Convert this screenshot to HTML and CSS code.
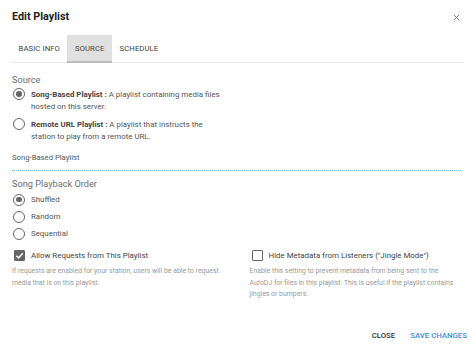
FILE: index.html
```html
<!DOCTYPE html>
<html>
<head>
<meta charset="utf-8">
<link rel="stylesheet" href="styles.css">
</head>
<body>
<div class="dialog">
  <div class="header">
    <div class="title">Edit Playlist</div>
    <div class="close-x">
      <svg width="7" height="7" viewBox="0 0 8 8"><path d="M1 1L7 7M7 1L1 7" stroke="#777" stroke-width="1.1"/></svg>
    </div>
  </div>
  <div class="tabs">
    <div class="tab">BASIC INFO</div>
    <div class="tab active">SOURCE</div>
    <div class="tab">SCHEDULE</div>
  </div>
  <div class="content">
    <div class="group-label">Source</div>
    <div class="option two">
      <span class="radio checked"></span>
      <div class="opt-text"><b>Song-Based Playlist :</b> A playlist containing media files<br>hosted on this server.</div>
    </div>
    <div class="option two">
      <span class="radio"></span>
      <div class="opt-text"><b>Remote URL Playlist :</b> A playlist that instructs the<br>station to play from a remote URL.</div>
    </div>
    <div class="section">
      <div class="section-title">Song-Based Playlist</div>
      <div class="dotted"></div>
    </div>
    <div class="group-label order">Song Playback Order</div>
    <div class="option"><span class="radio checked"></span><span class="opt-text">Shuffled</span></div>
    <div class="option"><span class="radio"></span><span class="opt-text">Random</span></div>
    <div class="option"><span class="radio"></span><span class="opt-text">Sequential</span></div>
    <div class="checks">
      <div class="check-col">
        <div class="check-row">
          <span class="checkbox checked">
            <svg width="9" height="9" viewBox="0 0 10 10"><path d="M1.5 5.2L4 7.6L8.6 2.4" fill="none" stroke="#fff" stroke-width="1.6"/></svg>
          </span>
          <span class="check-label">Allow Requests from This Playlist</span>
        </div>
        <div class="help">If requests are enabled for your station, users will be able to request media that is on this playlist.</div>
      </div>
      <div class="check-col">
        <div class="check-row">
          <span class="checkbox"></span>
          <span class="check-label">Hide Metadata from Listeners ("Jingle Mode")</span>
        </div>
        <div class="help">Enable this setting to prevent metadata from being sent to the AutoDJ for files in this playlist. This is useful if the playlist contains jingles or bumpers.</div>
      </div>
    </div>
  </div>
  <div class="actions">
    <span class="btn">CLOSE</span>
    <span class="btn primary">SAVE CHANGES</span>
  </div>
</div>
</body>
</html>
```
FILE: styles.css
```css
html, body {
  margin: 0;
  padding: 0;
  background: #fff;
}
body {
  font-family: Roboto, "Liberation Sans", sans-serif;
  color: rgba(0,0,0,0.87);
  width: 474px;
  height: 349px;
  overflow: hidden;
}
.dialog {
  display: flex;
  flex-direction: column;
}
.header {
  display: flex;
  justify-content: space-between;
  align-items: center;
  padding: 7px 12px 0 12px;
  height: 18px;
}
.title {
  font-size: 10.8px;
  font-weight: 700;
  color: #222;
}
.close-x {
  display: flex;
  margin-right: 2px;
  margin-top: 2px;
}
.tabs {
  display: flex;
  margin: 10px 11px 0 11px;
  border-bottom: 1px solid #e6e6e6;
  height: 27px;
}
.tab {
  font-size: 7.7px;
  color: #444;
  padding: 0 7.5px;
  display: flex;
  align-items: center;
  letter-spacing: 0.1px;
}
.active {
  background: #e0e0e0;
  border-bottom: 2px solid #bdbdbd;
  margin-bottom: -1px;
}
.content {
  padding: 0 12px;
}
.group-label {
  font-size: 9.2px;
  color: #6f6f6f;
  margin-top: 10px;
  line-height: 13px;
}
.option {
  display: flex;
  align-items: center;
  height: 17px;
  font-size: 7.9px;
  color: #555;
}
.option.two {
  align-items: flex-start;
  height: auto;
  margin-top: 3px;
  line-height: 12px;
}
.option.two + .option.two {
  margin-top: 6px;
}
.option.two .radio {
  margin-top: -1px;
}
.opt-text b {
  font-weight: 700;
  color: #444;
}
.radio {
  width: 10px;
  height: 10px;
  border: 1.6px solid #666;
  border-radius: 50%;
  margin: 0 6px 0 1px;
  flex: none;
  position: relative;
}
.radio.checked::after {
  content: "";
  position: absolute;
  left: 2.2px;
  top: 2.2px;
  width: 5.6px;
  height: 5.6px;
  border-radius: 50%;
  background: #666;
}
.section {
  margin-top: 10px;
}
.section-title {
  font-size: 7.7px;
  color: #555;
}
.dotted {
  margin-top: 8px;
  height: 1px;
  background: repeating-linear-gradient(90deg, #6fb2e4 0 1px, transparent 1px 2px);
}
.order {
  margin-top: 6px;
  margin-bottom: 1px;
}
.checks {
  display: flex;
  gap: 25px;
  margin-top: 6px;
}
.check-col {
  flex: 1;
}
.check-row {
  display: flex;
  align-items: center;
  height: 14px;
  margin-left: 2px;
}
.checkbox {
  width: 9px;
  height: 9px;
  border: 1.2px solid #666;
  border-radius: 1px;
  margin-right: 6px;
  display: flex;
  align-items: center;
  justify-content: center;
  flex: none;
}
.checkbox.checked {
  background: #666;
}
.check-label {
  font-size: 7.9px;
  color: #444;
}
.help {
  font-size: 6.9px;
  color: #9a9a9a;
  line-height: 11.5px;
  margin-top: 4px;
}
.actions {
  display: flex;
  justify-content: flex-end;
  gap: 15px;
  padding: 0 7px 0 0;
  margin-top: 30px;
}
.btn {
  font-size: 7.8px;
  font-weight: 500;
  color: #333;
}
.btn.primary {
  color: #3d8ee0;
}
```
